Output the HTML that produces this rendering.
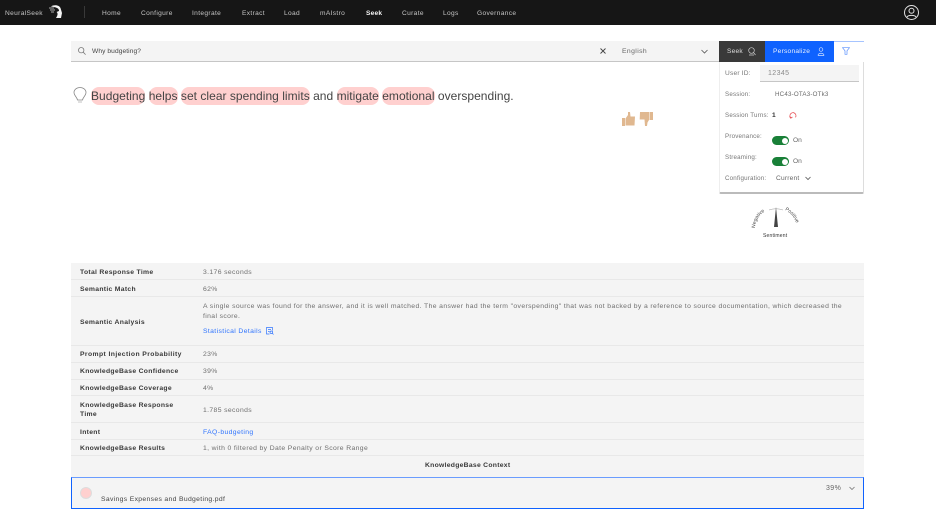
<!DOCTYPE html>
<html><head><meta charset="utf-8"><style>
html,body{margin:0;padding:0;background:#fff}
#p{position:relative;width:936px;height:524px;overflow:hidden;font-family:"Liberation Sans",sans-serif;color:#525252}
#p div,#p span.a,#p svg{position:absolute}
.t{white-space:nowrap;font-size:6.6px;line-height:10px;margin-top:1px}
.n{color:#c6c6c6;top:8px;margin-top:1px;font-size:6.6px;letter-spacing:.35px;white-space:nowrap;line-height:10px}
.l{left:80px;margin-top:1px;font-size:6.8px;font-weight:bold;color:#393939;white-space:nowrap;line-height:10px;letter-spacing:.3px}
.v{left:203px;margin-top:1px;font-size:6.8px;color:#6f6f6f;white-space:nowrap;line-height:10px;letter-spacing:.37px}
.r{left:71px;width:793px;height:1px;background:#e8e8e8}
.s{margin-top:1px;font-size:6.2px;color:#777;white-space:nowrap;line-height:10px;left:725px;letter-spacing:.2px}
mark{background:#ffd0cf;border-radius:8px;color:inherit;padding:2px 0}
</style></head><body><div id="p">
<div style="left:0;top:0;width:936px;height:25px;background:#161616"></div>
<div class="n" style="left:5px;color:#c6c6c6">NeuralSeek</div>
<svg style="left:48px;top:4px" width="15" height="14" viewBox="0 0 15 14"><path d="M3 2.500 C6 .5 11 1 12.500 4 L14 9 L13 14 L8 14 C10 11 10 9 8.500 8 L11 7 C11 4 8 3.500 6 3Z" fill="#f4f4f4"/><path d="M1 4h5M2 6h5M3 8h3" stroke="#aaa" stroke-width="1"/></svg>
<div style="left:84px;top:6px;width:1px;height:12px;background:#393939"></div>
<div class="n" style="left:102px">Home</div>
<div class="n" style="left:141px">Configure</div>
<div class="n" style="left:192px">Integrate</div>
<div class="n" style="left:242px">Extract</div>
<div class="n" style="left:284px">Load</div>
<div class="n" style="left:320px">mAIstro</div>
<div class="n" style="left:366px;color:#f4f4f4;font-weight:bold;letter-spacing:.2px">Seek</div>
<div class="n" style="left:402px">Curate</div>
<div class="n" style="left:443px">Logs</div>
<div class="n" style="left:477px">Governance</div>
<svg style="left:904px;top:5px" width="15" height="15" viewBox="0 0 15 15" fill="none" stroke="#e0e0e0" stroke-width="1"><circle cx="7.500" cy="7.500" r="7"/><circle cx="7.500" cy="5.700" r="2.500"/><path d="M3 12.300 C3.500 9.800 11.500 9.800 12 12.300"/></svg>

<div style="left:71px;top:41px;width:648px;height:20px;background:#f4f4f4;border-bottom:1px solid #c6c6c6;box-sizing:content-box"></div>
<svg style="left:78px;top:47px" width="8" height="8" viewBox="0 0 8 8" fill="none" stroke="#777" stroke-width=".8"><circle cx="3.200" cy="3.200" r="2.700"/><path d="M5.200 5.200 L7.600 7.600"/></svg>
<div class="t" style="left:92px;top:46px;color:#444;letter-spacing:.1px">Why budgeting?</div>
<svg style="left:600px;top:48px" width="6" height="6" viewBox="0 0 6 6" stroke="#444" stroke-width=".9"><path d="M.5 .5L5.500 5.500M5.500 .5L.5 5.500"/></svg>
<div class="t" style="left:622px;top:46px;color:#666;letter-spacing:.4px;font-size:6.8px">English</div>
<svg style="left:701px;top:49px" width="7" height="5" viewBox="0 0 7 5" fill="none" stroke="#555" stroke-width=".8"><path d="M.5 1L3.500 4L6.500 1"/></svg>

<div style="left:719px;top:41px;width:46px;height:21px;background:#393939"></div>
<div class="t" style="left:727px;top:46px;color:#ddd;letter-spacing:.2px">Seek</div>
<svg style="left:748px;top:47px" width="8" height="9" viewBox="0 0 8 9" fill="none" stroke="#ccc" stroke-width=".7"><circle cx="3.500" cy="3.500" r="2.800"/><path d="M5.500 5.500L7.500 8M1 8H6"/></svg>
<div style="left:765px;top:41px;width:69px;height:21px;background:#0f62fe"></div>
<div class="t" style="left:773px;top:46px;color:#e8f0ff;letter-spacing:.25px">Personalize</div>
<svg style="left:817px;top:47px" width="8" height="9" viewBox="0 0 8 9" fill="none" stroke="#cfe0ff" stroke-width=".7"><circle cx="4" cy="2.500" r="1.800"/><path d="M1 8.500C1 5.500 7 5.500 7 8.500M1 8.500H7"/></svg>
<div style="left:834px;top:41px;width:30px;height:20px;border-top:1px solid #a6c4ff;border-bottom:1px solid #a6c4ff"></div>
<svg style="left:842px;top:47px" width="8" height="8" viewBox="0 0 8 8" fill="none" stroke="#5a90fe" stroke-width=".7"><path d="M.5 .7H7.500L5 3.800V7.300H3V3.800Z"/></svg>

<div style="left:719px;top:62px;width:145px;height:132px;background:#fff;border-left:1px solid #eee;border-right:1px solid #ddd;border-bottom:2px solid #bbb;border-radius:0 0 2px 2px;box-sizing:border-box"></div>
<div class="s" style="top:68px;font-size:6.6px">User ID:</div>
<div style="left:760px;top:65px;width:99px;height:16px;background:#f4f4f4;border-bottom:1px solid #c6c6c6"></div>
<div class="t" style="left:768px;top:68px;color:#8a8a8a;font-size:7px;letter-spacing:.4px">12345</div>
<div class="s" style="top:89px">Session:</div>
<div class="s" style="left:775px;top:89px;color:#6a6a6a">HC43-OTA3-OTk3</div>
<div class="s" style="top:110px">Session Turns:</div>
<div class="t" style="left:772px;top:110px;color:#333;font-weight:bold">1</div>
<svg style="left:789px;top:111px" width="8" height="9" viewBox="0 0 8 9" fill="none" stroke="#e5484d" stroke-width=".8"><path d="M1.800 6.800A3 3 0 1 1 6.500 6.300M.5 5.500L1.800 7.200L3.400 6"/></svg>
<div class="s" style="top:131px">Provenance:</div>
<div style="left:772px;top:136px;width:17px;height:9px;border-radius:5px;background:#198038"></div>
<div style="left:782px;top:137.500px;width:6px;height:6px;border-radius:50%;background:#fff"></div>
<div class="t" style="left:793px;top:135px;color:#666">On</div>
<div class="s" style="top:152px">Streaming:</div>
<div style="left:772px;top:157px;width:17px;height:9px;border-radius:5px;background:#198038"></div>
<div style="left:782px;top:158.500px;width:6px;height:6px;border-radius:50%;background:#fff"></div>
<div class="t" style="left:793px;top:156px;color:#666">On</div>
<div class="s" style="top:173px">Configuration:</div>
<div class="t" style="left:776px;top:173px;color:#666;letter-spacing:.2px">Current</div>
<svg style="left:805px;top:176px" width="6" height="5" viewBox="0 0 6 5" fill="none" stroke="#555" stroke-width=".8"><path d="M.5 1L3 3.500L5.500 1"/></svg>

<svg style="left:746px;top:200px" width="60" height="40" viewBox="0 0 60 40"><defs><path id="g" d="M9 29 A21 21 0 0 1 51 29"/></defs><path d="M23 10 A21 21 0 0 1 37 10" fill="none" stroke="#999" stroke-width=".5"/><path d="M30 7L32 27H28Z" fill="#444"/>
<text font-size="5" fill="#444" font-family="Liberation Sans"><textPath href="#g" startOffset="1">Negative</textPath></text>
<text font-size="5" fill="#444" font-family="Liberation Sans"><textPath href="#g" startOffset="42">Positive</textPath></text>
<text x="17" y="37" font-size="5" fill="#333" font-family="Liberation Sans" letter-spacing=".2">Sentiment</text></svg>

<svg style="left:73px;top:87px" width="14" height="19" viewBox="0 0 14 19" fill="none" stroke="#888" stroke-width=".8"><path d="M4.500 13C4 10 1 8.500 1 5.500A6 5 0 0 1 13 5.500C13 8.500 10 10 9.500 13Z"/><path d="M5 15H9" stroke="#ccc" stroke-width="1.200"/></svg>
<div style="left:91px;top:89px;font-size:12px;line-height:15px;white-space:nowrap;color:#444;letter-spacing:.03px"><mark>Budgeting</mark> <mark>helps</mark> <mark>set clear spending limits</mark> and <mark>mitigate</mark> <mark>emotional</mark> overspending.</div>

<svg style="left:621px;top:111px" width="15" height="16" viewBox="0 0 15 16"><path d="M1 7H4V15H1ZM4.500 7.500L7 4V1H9L9.500 5.500H14L13.500 14.500H4.500Z" fill="#e0b890"/></svg>
<svg style="left:639px;top:111px" width="15" height="16" viewBox="0 0 15 16"><path d="M14 1H10.500V9H14ZM10 1H1L.7 8.500H5.500L6 15H8L8.500 11.500L10 9Z" fill="#e0b890"/></svg>

<div style="left:71px;top:263px;width:793px;height:216px;background:#f4f4f4"></div>
<div class="r" style="top:279px"></div><div class="r" style="top:296px"></div><div class="r" style="top:345px"></div><div class="r" style="top:362px"></div><div class="r" style="top:379px"></div><div class="r" style="top:395px"></div><div class="r" style="top:422px"></div><div class="r" style="top:439px"></div><div class="r" style="top:455px"></div>

<div class="l" style="top:267px">Total Response Time</div><div class="v" style="top:267px">3.176 seconds</div>
<div class="l" style="top:284px">Semantic Match</div><div class="v" style="top:284px">62%</div>
<div class="l" style="top:317px">Semantic Analysis</div>
<div class="v" style="top:301px;letter-spacing:.38px">A single source was found for the answer, and it is well matched. The answer had the term "overspending" that was not backed by a reference to source documentation, which decreased the</div>
<div class="v" style="top:311px">final score.</div>
<div class="v" style="top:326px;color:#2f74fe">Statistical Details</div>
<svg style="left:266px;top:327px" width="8" height="8" viewBox="0 0 8 8" fill="none" stroke="#2f74fe" stroke-width=".7"><path d="M6.500 3.500V.5H.5V7H3.500M2 2.500H5M2 4.500H3.500"/><circle cx="5.300" cy="5.300" r="1.300"/><path d="M6.300 6.300L7.500 7.500"/></svg>
<div class="l" style="top:349px;letter-spacing:.4px">Prompt Injection Probability</div><div class="v" style="top:349px">23%</div>
<div class="l" style="top:366px">KnowledgeBase Confidence</div><div class="v" style="top:366px">39%</div>
<div class="l" style="top:383px">KnowledgeBase Coverage</div><div class="v" style="top:383px">4%</div>
<div class="l" style="top:400px">KnowledgeBase Response</div><div class="l" style="top:409px">Time</div><div class="v" style="top:405px">1.785 seconds</div>
<div class="l" style="top:427px">Intent</div><div class="v" style="top:427px;color:#2f74fe">FAQ-budgeting</div>
<div class="l" style="top:443px">KnowledgeBase Results</div><div class="v" style="top:443px">1, with 0 filtered by Date Penalty or Score Range</div>
<div class="l" style="left:425px;top:460px;letter-spacing:.27px">KnowledgeBase Context</div>

<div style="left:71px;top:477px;width:793px;height:32px;background:#f4f4f4;border:1px solid #0f62fe;border-top-color:#6a9cfe;box-sizing:border-box"></div>
<div style="left:80px;top:487px;width:10px;height:10px;border-radius:50%;background:#ffd0cf;border:.5px solid #ddd"></div>
<div class="v" style="left:101px;top:494px;color:#444;letter-spacing:.33px">Savings Expenses and Budgeting.pdf</div>
<div class="t" style="left:826px;top:483px;color:#666;font-size:7px;letter-spacing:.4px">39%</div>
<svg style="left:849px;top:486px" width="6" height="5" viewBox="0 0 6 5" fill="none" stroke="#666" stroke-width=".7"><path d="M.5 1L3 3.500L5.500 1"/></svg>
</div></body></html>
